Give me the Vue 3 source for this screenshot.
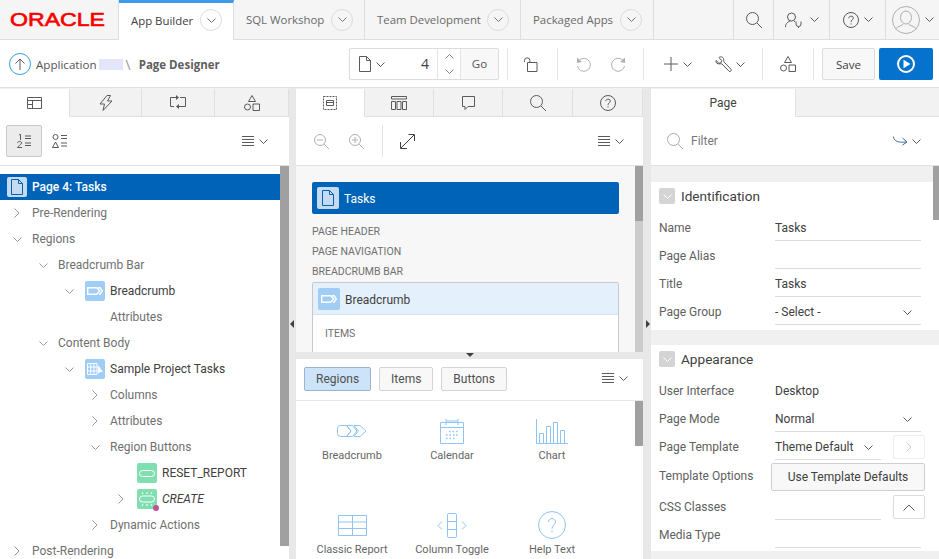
<script setup>
import { h } from 'vue'

const icons = {
  chev: [9, 5, '<path d="M.5.5 4.500 4.500 8.500.5"/>'],
  chevUp: [12, 7, '<path d="M.5 6.500 6 1l5.500 5.500"/>'],
  chevR: [6, 10, '<path d="M.5.5 5 5 .5 9.500"/>'],
  up: [22, 22, '<circle cx="11" cy="11" r="10.500"/><path class="k" d="M11 17V6M6.500 10.500 11 6l4.500 4.500"/>'],
  page: [12, 16, '<path d="M.5.5h7l4 4v11H.5zM7.500.5v4h4"/>'],
  search: [16, 16, '<circle cx="6.500" cy="6.500" r="6"/><path d="m11 11 5 5"/>'],
  adminUser: [20, 16, '<circle cx="6.500" cy="5" r="4"/><path d="M.5 15c0-4 3-5.500 5-6M9 9l1 1"/><path d="M11 9.500v2.500a2.500 2.500 0 0 0 5 0V9.500M13.500 14.500v1.500"/>'],
  help: [16, 16, '<circle cx="8" cy="8" r="7.500"/><path d="M5.800 6.200C5.800 3.500 10.300 3.500 10.300 6c0 2-2.300 1.800-2.300 4M8 11.300v1.200"/>'],
  user: [28, 28, '<circle cx="14" cy="14" r="13.500"/><ellipse cx="14" cy="11.500" rx="5.500" ry="6.500"/><path d="M3.500 23c3-3.500 6.500-3 8-5M24.500 23c-3-3.500-6.500-3-8-5"/>'],
  stepUp: [9, 5, '<path d="M.5 4.500 4.500.5l4 4"/>'],
  stepDown: [9, 5, '<path d="M.5.5l4 4 4-4"/>'],
  lock: [14, 15, '<path d="M3.500 5.500h9.500v9H3.500z"/><path d="M.5 5V3.500a2.700 2.700 0 0 1 5.400 0V5.500"/>'],
  undo: [15, 15, '<path d="M3.500 3A6.500 6.500 0 1 1 1.500 9"/><path class="f" d="M1 .5 6 5 1 6z"/>'],
  redo: [15, 15, '<path d="M11.500 3A6.500 6.500 0 1 0 13.500 9"/><path class="f" d="M14 .5 9 5l5 1z"/>'],
  plus: [14, 14, '<path d="M7 0v14M0 7h14"/>'],
  wrench: [17, 17, '<path d="M1 4.500 4 7.300l2-.6.800-2L4 1.600C6-.2 9 1.200 8.700 4.300c0 .7-.1 1.300.4 1.800l7 7.200c.8 1-.8 3-2 2l-7-7.200c-.5-.5-1.200-.4-2-.3C2.500 8.300.5 7 1 4.500z"/>'],
  shapes: [16, 16, '<path d="M8 .5l3.500 6h-7z"/><circle cx="3.500" cy="12" r="3"/><path d="M9 9h6.500v6.500H9z"/>'],
  run: [18, 18, '<circle cx="9" cy="9" r="8" stroke-width="2"/><path class="f" d="M6.500 4.800 13.500 9l-7 4.200z"/>'],
  layout: [15, 12, '<path d="M.5.5h14v11H.5zM.5 3.500h14M5.500 3.500v8M.5 7.500h5"/>'],
  bolt: [14, 16, '<path d="M8 .5 1 9h4.500L4 15.500 13 6H8.500l3-5.500z"/>'],
  shared: [16, 15, '<path d="M6 2.500H.5v9H4M10 2.500h5.500v9H8"/><path class="f" d="M6 0v5L9 2.500zM9 9v5l-3-2.500z"/>'],
  order1: [16, 14, '<path d="M3 .8 4.500.5V6M9 2h6M9 4.500h6M9 9h6M9 11.500h6M1.500 9c.2-2 4.500-2 4 0C5 11 2 12 1.500 13.500h4.500"/>'],
  order2: [16, 14, '<circle cx="3.500" cy="3" r="2.500"/><path d="M3.500 8l3 5.500h-6zM9 1.500h6M9 4.500h6M9 9h6M9 12h6"/>'],
  menu: [12, 11, '<path d="M0 .5h12M0 3.500h12M0 6.500h12M0 9.500h12"/>'],
  grid: [14, 14, '<path d="M.5.5h13v13H.5z" stroke-dasharray="2 1"/><path d="M3.500 4.500h7v5h-7zM3.500 6.500h7"/>'],
  layout2: [16, 14, '<path d="M.5.500h15v2.500H.5zM.5 5.500h4v8h-4zM6 5.500h4v8H6zM11.500 5.500h4v8h-4z"/>'],
  msg: [13, 14, '<path d="M.5.500h12v10H6l-3 3v-3H.5z"/>'],
  zoomOut: [15, 15, '<circle cx="6" cy="6" r="5.500"/><path d="m10 10 5 5M3 6h6"/>'],
  zoomIn: [15, 15, '<circle cx="6" cy="6" r="5.500"/><path d="m10 10 5 5M3 6h6M6 3v6"/>'],
  expand: [15, 15, '<path d="M1 14 14 1M8.500.5h6V7M.5 8v6.500H7"/>'],
  go: [15, 10, '<path d="M.5.5c0 4 4 6.500 13 5.500M9.500 2l4.500 4-4.500 3"/>'],
  bc: [16, 8, '<path stroke-width="1.400" d="M.7.7h9l3 3.300-3 3.300h-9zM11 .7h2l2.400 3.300L13 7.300h-1"/>'],
  report: [16, 12, '<path d="M.5.5h9.500v11H.5zM.5 4h9.500M.5 8h9.500M3.700.5v11M7 .5v11"/><path class="f" d="M11 2v9l2-2 3 0z"/>'],
  btn: [16, 7, '<rect x=".5" y=".5" width="15" height="6" rx="3"/>'],
  btn2: [16, 14, '<rect x=".5" y="4" width="15" height="6" rx="3"/><path d="M3 0l1 2M8 0v2M13 0l-1 2M3 14l1-2M8 14v-2M13 14l-1-2"/>'],
  gBread: [30, 12, '<path d="M3.500.5h6l4.500 5.500-4.500 5.500h-6q-3 0-3-3v-5q0-3 3-3zM9.500.5h6l4.500 5.500-4.500 5.500h-6l4.500-5.500zM17 .5h6l6 5.500-6 5.500h-6l4.500-5.500z"/>'],
  gCal: [24, 27, '<path d="M.5 4.500h23v21H.5zM.5 9.500h23M6 1v6M18 1v6M6 3h12"/><path d="M9 13.500h1.500M12.500 13.500h1.500M16 13.500h1.500M6 17h1.500M9.500 17H11M13 17h1.500M16 17h1.500M6 20.500h1.500M9.500 20.500H11M13 20.500h1.500" stroke-width="1.500"/>'],
  gChart: [32, 25, '<path d="M.5 0v24.500h31.500M3.500 24V14.500h4V24M10.500 24V7.500h4V24M17.500 24V3.500h4V24M24.500 24V11.500h4V24"/>'],
  gReport: [29, 21, '<path d="M.5.5h28v20H.5zM.5 7h28M.5 13.500h28M14.500.5v20"/>'],
  gToggle: [30, 25, '<rect x="10.500" y=".5" width="9" height="24" rx="1"/><path d="M10.500 8.500h9M10.500 16.500h9M5 8.500l-4 4 4 4M25 8.500l4 4-4 4"/>'],
  gHelp: [28, 28, '<circle cx="14" cy="14" r="13.500"/><path d="M10.500 11c0-4.500 7-4.500 7 0 0 3-3.500 3-3.500 6.500M14 19.500v2"/>']
}

const Ico = (props) => {
  const d = icons[props.n]
  return h('svg', {
    width: d[0], height: d[1], viewBox: `0 0 ${d[0]} ${d[1]}`,
    fill: 'none', stroke: 'currentColor', class: 'ico', innerHTML: d[2]
  })
}
Ico.props = ['n']

const appTabs = [
  { t: 'App Builder', w: 115, active: true },
  { t: 'SQL Workshop', w: 131 },
  { t: 'Team Development', w: 156 },
  { t: 'Packaged Apps', w: 133 }
]
const hdrCells = [
  { n: 'search', w: 40 }, { n: 'adminUser', w: 56, c: true },
  { n: 'help', w: 56, c: true }, { n: 'user', w: 54, c: true }
]
const leftTabs = [{ n: 'layout', w: 70, a: true }, { n: 'bolt', w: 72 }, { n: 'shared', w: 73 }, { n: 'shapes', w: 74 }]
const midTabs = [{ n: 'grid', w: 69, a: true }, { n: 'layout2', w: 69 }, { n: 'msg', w: 69 }, { n: 'search', w: 70 }, { n: 'help', w: 70 }]

const tree = [
  { t: 'Page 4: Tasks', l: 0, sel: true, icon: 'page', kind: 'sel' },
  { t: 'Pre-Rendering', l: 0, tog: 'r' },
  { t: 'Regions', l: 0, tog: 'd' },
  { t: 'Breadcrumb Bar', l: 1, tog: 'd' },
  { t: 'Breadcrumb', l: 2, tog: 'd', icon: 'bc', kind: 'blue', dark: true },
  { t: 'Attributes', l: 3 },
  { t: 'Content Body', l: 1, tog: 'd' },
  { t: 'Sample Project Tasks', l: 2, tog: 'd', icon: 'report', kind: 'blue', dark: true },
  { t: 'Columns', l: 3, tog: 'r' },
  { t: 'Attributes', l: 3, tog: 'r' },
  { t: 'Region Buttons', l: 3, tog: 'd' },
  { t: 'RESET_REPORT', l: 4, icon: 'btn', kind: 'green', dark: true },
  { t: 'CREATE', l: 4, tog: 'r', icon: 'btn2', kind: 'green', dark: true, em: true, dot: true },
  { t: 'Dynamic Actions', l: 3, tog: 'r' },
  { t: 'Post-Rendering', l: 0, tog: 'r' }
]
const gallery = [
  { n: 'gBread', t: 'Breadcrumb' }, { n: 'gCal', t: 'Calendar' }, { n: 'gChart', t: 'Chart' },
  { n: 'gReport', t: 'Classic Report' }, { n: 'gToggle', t: 'Column Toggle' }, { n: 'gHelp', t: 'Help Text' }
]
const idRows = [
  { l: 'Name', v: 'Tasks' }, { l: 'Page Alias', v: '' }, { l: 'Title', v: 'Tasks' }, { l: 'Page Group', v: '- Select -', sel: true }
]
</script>

<template>
  <div class="app">
    <header class="hdr">
      <div class="logo">
        <svg width="104" height="22" viewBox="0 0 104 22">
          <text x="0" y="16" textLength="95" lengthAdjust="spacingAndGlyphs" class="logotext">ORACLE</text>
        </svg>
      </div>
      <a v-for="tab in appTabs" :key="tab.t" class="apptab" :class="{ on: tab.active }" :style="{ width: tab.w + 'px' }">
        <span>{{ tab.t }}</span>
        <i class="round"><Ico n="chev" /></i>
      </a>
      <div class="hspace"></div>
      <div v-for="c in hdrCells" :key="c.n" class="hcell" :style="{ width: c.w + 'px' }">
        <Ico :n="c.n" :class="{ pale: c.n === 'user' }" />
        <Ico v-if="c.c" n="chev" />
      </div>
    </header>

    <div class="tbar">
      <div class="crumb">
        <span class="upic"><Ico n="up" /></span>
        <span class="appl">Application</span>
        <span class="redact"></span>
        <span class="slash">\</span>
        <b class="pd">Page Designer</b>
      </div>
      <div class="pgroup">
        <div class="pgsel"><Ico n="page" /><Ico n="chev" /></div>
        <div class="pgnum">4</div>
        <div class="pgstep"><Ico n="stepUp" /><Ico n="stepDown" /></div>
        <div class="pggo">Go</div>
      </div>
      <div class="tcell c-lock"><Ico n="lock" /></div>
      <div class="tcell c-undo"><span class="pale"><Ico n="undo" /></span><span class="pale"><Ico n="redo" /></span></div>
      <div class="tcell c-add">
        <span class="pair"><Ico n="plus" /><Ico n="chev" /></span>
        <span class="pair p2"><Ico n="wrench" /><Ico n="chev" /></span>
      </div>
      <div class="tcell c-shape"><Ico n="shapes" /></div>
      <button class="save">Save</button>
      <button class="runbtn"><Ico n="run" /></button>
    </div>

    <main class="work">
      <section class="pane left">
        <div class="ptabs">
          <div v-for="t in leftTabs" :key="t.n" class="ptab" :class="{ on: t.a }" :style="{ width: t.w + 'px' }"><Ico :n="t.n" /></div>
        </div>
        <div class="ptools">
          <span class="toggle on"><Ico n="order1" /></span>
          <span class="toggle"><Ico n="order2" /></span>
          <span class="menu"><Ico n="menu" /><Ico n="chev" /></span>
        </div>
        <div class="tree">
          <div class="sbar full"></div>
          <div v-for="(r, i) in tree" :key="i" class="row" :class="['l' + r.l, { sel: r.sel, dark: r.dark }]">
            <span class="tog">
              <Ico v-if="r.tog === 'r'" n="chevR" />
              <Ico v-else-if="r.tog === 'd'" n="chev" />
            </span>
            <span v-if="r.icon" class="nodeic" :class="r.kind">
              <Ico :n="r.icon" />
              <i v-if="r.dot" class="dot"></i>
            </span>
            <span class="lbl" :class="{ em: r.em }">{{ r.t }}</span>
          </div>
        </div>
      </section>

      <div class="vsplit"><i class="arrow l"></i></div>

      <section class="pane mid">
        <div class="ptabs">
          <div v-for="t in midTabs" :key="t.n" class="ptab" :class="{ on: t.a }" :style="{ width: t.w + 'px' }"><Ico :n="t.n" /></div>
        </div>
        <div class="ptools zt">
          <span class="zoomb pale"><Ico n="zoomOut" /></span>
          <span class="zoomb pale"><Ico n="zoomIn" /></span>
          <span class="zsep"></span>
          <span class="expand"><Ico n="expand" /></span>
          <span class="menu m2"><Ico n="menu" /><Ico n="chev" /></span>
        </div>
        <div class="canvas">
          <div class="sbar track"><i></i></div>
          <div class="pagebar">
            <span class="nodeic sel big"><Ico n="page" /></span>
            <span class="nudge">Tasks</span>
          </div>
          <div class="cap first">PAGE HEADER</div>
          <div class="cap">PAGE NAVIGATION</div>
          <div class="cap">BREADCRUMB BAR</div>
          <div class="region">
            <div class="reghead">
              <span class="nodeic blue big"><Ico n="bc" /></span>
              <span class="nudge">Breadcrumb</span>
            </div>
            <div class="regbody">ITEMS</div>
          </div>
        </div>
        <div class="hsplit"><i class="arrow d"></i></div>
        <div class="galtools">
          <button class="gbtn on">Regions</button>
          <button class="gbtn">Items</button>
          <button class="gbtn">Buttons</button>
          <span class="menu m3"><Ico n="menu" /><Ico n="chev" /></span>
        </div>
        <div class="gallery">
          <div class="sbar short"></div>
          <div v-for="g in gallery" :key="g.n" class="gitem">
            <span class="gicon"><Ico :n="g.n" /></span>
            <span class="gtext">{{ g.t }}</span>
          </div>
        </div>
      </section>

      <div class="vsplit wide"><i class="arrow r"></i></div>

      <section class="pane right">
        <div class="ptabs">
          <div class="ptab on ptxt">Page</div>
          <div class="ptabrest"></div>
        </div>
        <div class="ptools filter">
          <span class="pale2"><Ico n="search" /></span>
          <span class="ftxt">Filter</span>
          <span class="gomenu"><span class="bluei"><Ico n="go" /></span><Ico n="chev" /></span>
        </div>
        <div class="props">
          <div class="sbar rs"></div>
          <div class="strip s1"></div>
          <div class="group g1">
            <div class="ghead"><i class="gchk"><Ico n="chev" /></i>Identification</div>
            <div v-for="r in idRows" :key="r.l" class="prow">
              <label>{{ r.l }}</label>
              <div class="pval"><span>{{ r.v }}</span><Ico v-if="r.sel" n="chev" /></div>
            </div>
          </div>
          <div class="strip s2"></div>
          <div class="group">
            <div class="ghead"><i class="gchk"><Ico n="chev" /></i>Appearance</div>
            <div class="prow">
              <label>User Interface</label>
              <div class="pval plain"><span>Desktop</span></div>
            </div>
            <div class="prow">
              <label>Page Mode</label>
              <div class="pval"><span>Normal</span><Ico n="chev" /></div>
            </div>
            <div class="prow">
              <label>Page Template</label>
              <div class="pval short"><span>Theme Default</span><Ico n="chev" /></div>
              <button class="sq dim"><Ico n="chevR" /></button>
            </div>
            <div class="prow tall">
              <label>Template Options</label>
              <button class="defaults">Use Template Defaults</button>
            </div>
            <div class="prow">
              <label>CSS Classes</label>
              <div class="pval short"><span></span></div>
              <button class="sq"><Ico n="chevUp" /></button>
            </div>
            <div class="prow">
              <label>Media Type</label>
              <div class="pval"><span></span></div>
            </div>
          </div>
          <div class="strip s3"></div>
        </div>
      </section>
    </main>
  </div>
</template>

<style>
html, body { margin: 0; overflow: hidden; background: #fff; }
</style>

<style scoped>
.app {
  width: 939px; height: 559px; overflow: hidden; display: flex; flex-direction: column;
  font-family: Roboto, "Liberation Sans", sans-serif; font-size: 12px; color: #404040;
}
.ico { display: block; flex: none; color: #5a5a5a; overflow: visible; }
.ico :deep(.f) { fill: currentColor; stroke: none; }

/* header */
.hdr { height: 40px; flex: none; display: flex; background: #f5f5f5; border-bottom: 1px solid #dedede; box-sizing: border-box; }
.logo { width: 119px; flex: none; box-sizing: border-box; padding: 10px 0 0 10px; border-right: 1px solid #dedede; }
.logo svg { display: block; }
.logotext { font-family: "Liberation Sans", sans-serif; font-weight: 400; font-size: 18px; fill: #f80000; stroke: #f80000; stroke-width: .6px; }
.apptab {
  box-sizing: border-box; flex: none; display: flex; align-items: center; justify-content: space-between;
  padding: 0 11px 0 12px; border-right: 1px solid #dedede; font-family: "Open Sans", sans-serif; font-size: 11.400px; color: #6a6a6a; height: 39px; white-space: nowrap;
}
.apptab.on { background: #fff; border-top: 3px solid #3c9be8; color: #404040; height: 40px; padding-bottom: 3px; }
.round { width: 22px; height: 22px; box-sizing: border-box; border: 1px solid #dcdcdc; border-radius: 50%; display: flex; align-items: center; justify-content: center; font-style: normal; }
.round .ico { color: #777; }
.hspace { flex: 1; }
.hcell { flex: none; box-sizing: border-box; border-left: 1px solid #dedede; display: flex; align-items: center; justify-content: center; gap: 5px; }
.pale { color: #b5b5b5; }
.pale .ico, .ico.pale { color: #b0b0b0; }

/* toolbar */
.tbar { height: 48px; flex: none; box-sizing: border-box; display: flex; align-items: flex-start; padding-top: 8px; background: #fff; border-bottom: 1px solid #e0e0e0; }
.crumb { width: 349px; height: 32px; flex: none; box-sizing: border-box; padding-left: 9px; display: flex; align-items: center; font-family: "Open Sans", sans-serif; font-size: 11.600px; color: #555; }
.upic .ico { color: #3c9be8; }
.upic .ico :deep(.k) { stroke: #5a5a5a; }
.appl { margin-left: 5px; }
.redact { width: 24px; height: 11px; margin-left: 2px; background: #e5e5fa; }
.slash { margin: 0 8px 0 3px; color: #999; font-size: 14px; }
.pd { font-weight: 700; font-size: 11.500px; color: #606060; }
.pgroup { width: 150px; height: 32px; flex: none; box-sizing: border-box; display: flex; border: 1px solid #dcdcdc; border-radius: 2px; }
.pgsel { width: 58px; flex: none; box-sizing: border-box; padding-left: 9px; display: flex; align-items: center; gap: 5px; }
.pgnum { width: 29px; flex: none; box-sizing: border-box; text-align: right; padding-right: 8px; line-height: 30px; font-family: "Open Sans", sans-serif; font-size: 14px; }
.pgstep { width: 24px; flex: none; border-left: 1px solid #e4e4e4; border-right: 1px solid #e4e4e4; display: flex; flex-direction: column; align-items: center; justify-content: center; gap: 10px; box-sizing: border-box; }
.pgstep .ico { color: #888; }
.pggo { flex: 1; text-align: center; line-height: 30px; background: #f8f8f8; font-family: "Open Sans", sans-serif; font-size: 11.600px; color: #555; }
.tcell { height: 32px; flex: none; box-sizing: border-box; display: flex; align-items: center; border-left: 1px solid #e4e4e4; }
.c-lock { margin-left: 8px; width: 50px; padding-left: 16px; }
.c-undo { width: 86px; padding-left: 18px; gap: 20px; }
.c-add { width: 119px; padding-left: 20px; gap: 23px; }
.c-shape { padding-left: 17px; border-right: 1px solid #e4e4e4; box-sizing: content-box; width: 33px; }
.pair { display: flex; align-items: center; gap: 5px; }
.p2 { gap: 4px; }
.save { width: 53px; height: 32px; margin-left: 8px; flex: none; padding: 0; border: 1px solid #dcdcdc; border-radius: 2px; background: #f8f8f8; font-family: "Open Sans", sans-serif; font-size: 11.600px; color: #404040; }
.runbtn { width: 54px; height: 32px; margin-left: 4px; flex: none; padding: 0; border: 0; border-radius: 2px; background: #0572ce; display: flex; align-items: center; justify-content: center; }
.runbtn .ico { color: #fff; }

/* panes */
.work { flex: 1; min-height: 0; display: flex; background: #e8e8e8; }
.pane { background: #fff; display: flex; flex-direction: column; min-height: 0; flex: none; }
.left { width: 289px; }
.mid { width: 347px; }
.right { width: 288px; }
.vsplit { width: 7px; flex: none; position: relative; }
.vsplit.wide { width: 8px; }
.arrow { position: absolute; width: 0; height: 0; border-style: solid; border-color: transparent; }
.arrow.l { left: 1px; top: 232px; border-width: 4px 4px 4px 0; border-right-color: #404040; }
.arrow.r { left: 3px; top: 232px; border-width: 4px 0 4px 4px; border-left-color: #404040; }
.arrow.d { left: 170px; top: 1px; border-width: 4px 4px 0 4px; border-top-color: #404040; }
.ptabs { height: 29px; flex: none; box-sizing: border-box; display: flex; background: #f2f2f2; border-top: 1px solid transparent; }
.ptab { flex: none; box-sizing: border-box; display: flex; align-items: center; justify-content: center; border-right: 1px solid #e0e0e0; border-bottom: 1px solid #e0e0e0; }
.ptab.on { background: #fff; border-bottom-color: #fff; }
.ptxt { width: 145px; font-size: 12px; color: #404040; }
.ptabrest { flex: 1; border-bottom: 1px solid #e0e0e0; }
.ptools { height: 49px; flex: none; box-sizing: border-box; display: flex; align-items: center; border-bottom: 1px solid #e0e0e0; padding: 0 6px; position: relative; }
.toggle { width: 36px; height: 32px; box-sizing: border-box; display: flex; align-items: center; justify-content: center; border: 1px solid transparent; border-radius: 2px; }
.toggle.on { background: #ececec; border-color: #c8c8c8; }
.menu { margin-left: auto; margin-right: 15px; display: flex; align-items: center; gap: 5px; }
.m2 { margin-right: 13px; }
.zt { padding-left: 8px; }
.zoomb { width: 35px; display: flex; justify-content: center; }
.zsep { width: 1px; height: 32px; background: #e4e4e4; margin: 0 17px 0 8px; }
.expand .ico { color: #404040; }

/* tree */
.tree { flex: 1; min-height: 0; position: relative; padding-top: 8px; overflow: hidden; }
.sbar { position: absolute; right: 0; top: 0; width: 9px; background: #a0a0a0; z-index: 2; }
.sbar.full { height: 380px; }
.row { height: 26px; box-sizing: border-box; display: flex; align-items: center; color: #707070; position: relative; white-space: nowrap; }
.row.dark { color: #404040; }
.row.sel { background: #0063b8; color: #fff; font-weight: 500; margin-right: 9px; padding-left: 7px; }
.tog { width: 16px; display: flex; justify-content: center; flex: none; }
.tog .ico { color: #9a9a9a; }
.row.l0 { padding-left: 9px; }
.row.l0 .lbl { margin-left: 7px; }
.row.sel.l0 { padding-left: 7px; }
.row.sel .tog { display: none; }
.row.sel .nodeic { margin-right: 5px; }
.row.sel.l0 .lbl { margin-left: 0; }
.row.l1 { padding-left: 35px; }
.row.l1 .lbl { margin-left: 7px; }
.row.l2 { padding-left: 61px; }
.row.l2 .nodeic { margin-left: 8px; margin-right: 5px; }
.row.l3 { padding-left: 87px; }
.row.l3 .lbl { margin-left: 7px; }
.row.l4 { padding-left: 113px; }
.row.l4 .nodeic { margin-left: 8px; margin-right: 5px; }
.nodeic { width: 20px; height: 20px; border-radius: 2px; display: flex; align-items: center; justify-content: center; flex: none; position: relative; }
.nodeic.big { width: 22px; height: 22px; }
.nodeic.blue { background: #9fcdf6; }
.nodeic.green { background: #7fdfb1; }
.nodeic.sel { background: #c5dbef; }
.nodeic.sel .ico { color: #0063b8; }
.nodeic.blue .ico, .nodeic.green .ico { color: #fff; }
.em { font-style: italic; }
.dot { position: absolute; right: -2px; bottom: -2px; width: 6px; height: 6px; border-radius: 50%; background: #c0509a; }

/* canvas */
.canvas { height: 186px; flex: none; box-sizing: border-box; background: #f7f7f7; padding: 16px 24px 0 16px; position: relative; overflow: hidden; }
.sbar.track { height: 186px; width: 8px; background: #ccc; }
.sbar.track i { display: block; height: 55px; background: #a0a0a0; }
.pagebar { height: 32px; display: flex; align-items: center; gap: 5px; padding-left: 5px; background: #0063b8; color: #fff; border-radius: 2px; font-size: 12px; }
.nudge { padding-top: 2px; }
.cap { height: 20px; line-height: 20px; font-size: 10.500px; color: #707070; }
.cap.first { margin-top: 8px; }
.region { background: #fff; border: 1px solid #c8c8c8; border-radius: 2px; height: 100px; }
.reghead { height: 32px; box-sizing: border-box; display: flex; align-items: center; gap: 5px; padding-left: 5px; background: #e4f1fc; border-bottom: 1px solid #d4e4f2; color: #404040; }
.regbody { padding: 12px 12px; font-size: 10.500px; color: #707070; }
.hsplit { height: 7px; flex: none; background: #e8e8e8; position: relative; }
.galtools { height: 42px; flex: none; box-sizing: border-box; display: flex; align-items: center; gap: 8px; padding: 0 0 2px 8px; border-bottom: 1px solid #e8e8e8; }
.gbtn { height: 24px; padding: 0 11px; box-sizing: border-box; flex: none; border: 1px solid #d4d4d4; border-radius: 2px; background: #f8f8f8; font-family: Roboto, sans-serif; font-size: 12px; color: #505050; }
.gbtn.on { background: #cce3f9; border-color: #9ab4cc; }
.m3 { margin-right: 15px; }
.gallery { flex: 1; min-height: 0; position: relative; display: grid; grid-template-columns: repeat(3, 100px); grid-auto-rows: 94px; padding: 16px 0 0 6px; overflow: hidden; }
.sbar.short { width: 8px; height: 45px; }
.gitem { display: flex; flex-direction: column; align-items: center; }
.gicon { height: 28px; display: flex; align-items: center; justify-content: center; }
.gicon .ico { color: #8fc4f5; }
.gtext { line-height: 14px; font-size: 11px; color: #666; margin-top: 4px; }

/* properties */
.filter { padding: 0 0 0 16px; }
.pale2 .ico { color: #aaa; }
.ftxt { margin-left: 8px; color: #777; }
.gomenu { margin-left: auto; margin-right: 18px; display: flex; align-items: center; gap: 4px; }
.bluei .ico { color: #3d6fa8; }
.props { flex: 1; min-height: 0; position: relative; overflow: hidden; }
.sbar.rs { width: 6px; height: 54px; }
.strip { background: #f0f0f0; }
.s1 { height: 16px; }
.s2 { height: 15px; }
.s3 { height: 10px; }
.group { padding: 0 14px 0 8px; }
.g1 { height: 148px; box-sizing: border-box; }
.ghead { height: 28px; display: flex; align-items: center; gap: 6px; font-size: 13.600px; color: #404040; margin-bottom: 6px; }
.gchk { width: 16px; height: 16px; flex: none; background: #d4d4d4; border-radius: 2px; display: flex; align-items: center; justify-content: center; }
.gchk .ico { color: #fff; }
.prow { height: 28px; display: flex; align-items: flex-start; position: relative; white-space: nowrap; }
.prow label { width: 116px; flex: none; line-height: 24px; color: #606060; }
.pval { width: 146px; height: 25px; flex: none; box-sizing: border-box; display: flex; align-items: center; justify-content: space-between; padding-right: 9px; border-bottom: 1px solid #dcdcdc; color: #404040; }
.pval.plain { border-bottom-color: transparent; }
.pval.short { width: 106px; padding-right: 8px; }
.sq { width: 32px; height: 24px; margin-left: 12px; padding: 0; flex: none; box-sizing: border-box; border: 1px solid #dcdcdc; border-radius: 2px; background: #fff; display: flex; align-items: center; justify-content: center; }
.sq.dim { border-color: #eee; }
.sq.dim .ico { color: #ccc; }
.prow.tall { height: 32px; }
.prow.tall label { line-height: 26px; width: 112px; }
.defaults { width: 154px; height: 28px; padding: 0; flex: none; box-sizing: border-box; border: 1px solid #cfcfcf; border-radius: 2px; background: #f8f8f8; font-family: Roboto, sans-serif; font-size: 12px; color: #404040; }
</style>
